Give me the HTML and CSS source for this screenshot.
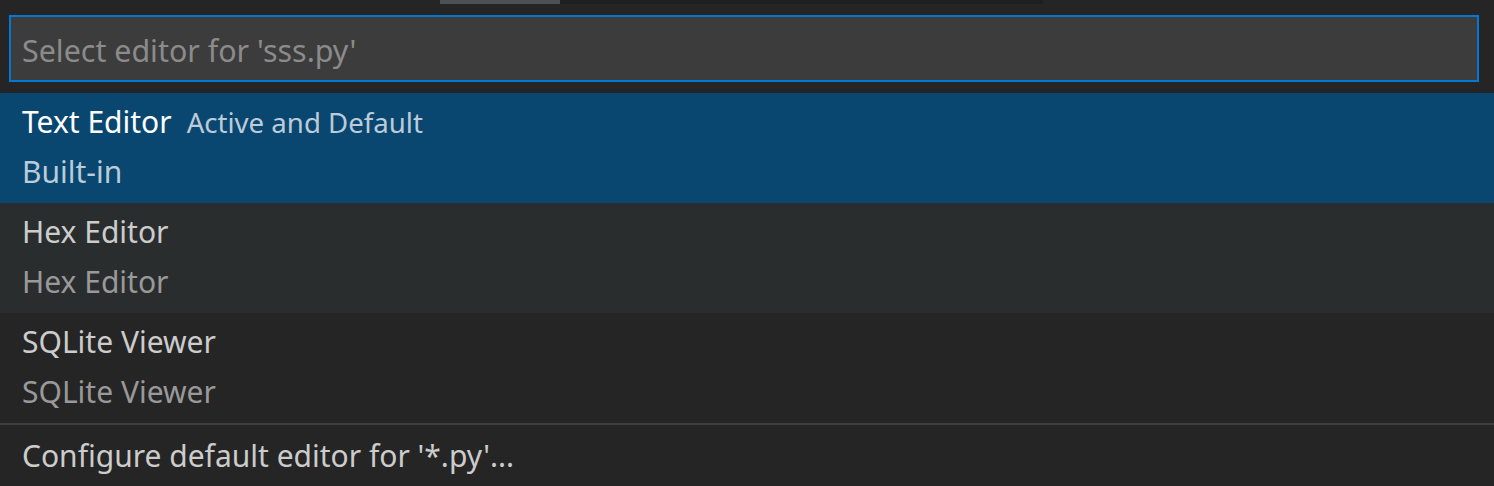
FILE: index.html
```html
<!DOCTYPE html>
<html>
<head>
<meta charset="utf-8">
<link rel="stylesheet" href="styles.css">
</head>
<body>
<div class="topstrip"><div class="thumb"></div><div class="track"></div></div>
<div class="input-wrap"><div class="input"><span class="placeholder">Select editor for 'sss.py'</span></div></div>
<div class="list">
  <div class="row selected">
    <div class="line"><span class="label">Text Editor</span><span class="desc">Active and Default</span></div>
    <div class="line detail">Built-in</div>
  </div>
  <div class="row hover">
    <div class="line"><span class="label">Hex Editor</span></div>
    <div class="line detail">Hex Editor</div>
  </div>
  <div class="row">
    <div class="line"><span class="label">SQLite Viewer</span></div>
    <div class="line detail">SQLite Viewer</div>
  </div>
  <div class="row single separated">
    <div class="line"><span class="label">Configure default editor for '*.py'...</span></div>
  </div>
</div>
</body>
</html>
```
FILE: styles.css
```css
html, body {
  margin: 0;
  padding: 0;
  background: #252526;
  height: 100%;
  overflow: hidden;
}
body {
  font-family: "Noto Sans", "Open Sans", sans-serif;
  font-size: 30px;
  color: #cccccc;
}
.topstrip {
  display: flex;
  height: 4px;
  padding-left: 440px;
}
.thumb {
  width: 120px;
  background: #4b5154;
}
.track {
  width: 483px;
  background: #1f1f1f;
}
.input-wrap {
  padding: 11px 15px 11px 9px;
}
.input {
  height: 63px;
  box-sizing: content-box;
  border: 2px solid #0078d4;
  background: #3c3c3c;
  display: flex;
  align-items: center;
  padding-left: 11px;
}
.placeholder {
  color: #8b8b8b;
  line-height: 40px;
  font-size: 30.4px;
  padding-top: 4px;
}
.list {
  display: flex;
  flex-direction: column;
}
.row {
  height: 110px;
  box-sizing: border-box;
  padding: 4px 0 0 22px;
}
.row.selected {
  background: #094771;
  color: #ffffff;
}
.row.hover {
  background: #2a2d2e;
}
.line {
  height: 50px;
  line-height: 50px;
  white-space: nowrap;
}
.desc {
  font-size: 27.6px;
  margin-left: 15px;
  color: #bccbd8;
}
.detail {
  color: #999999;
}
.selected .detail {
  color: #bccbd8;
}
.row.single {
  height: auto;
  padding-top: 6px;
}
.separated {
  border-top: 2px solid #3f3f40;
}
```
